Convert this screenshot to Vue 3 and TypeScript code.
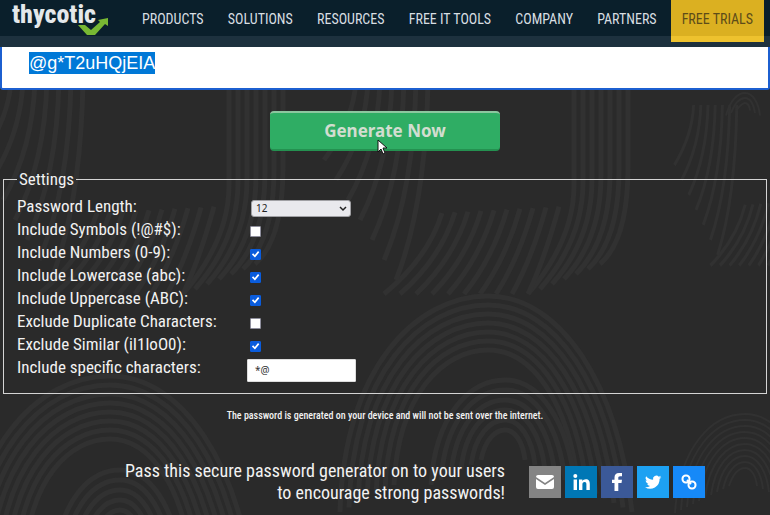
<script setup lang="ts">
import { onMounted, reactive, ref } from 'vue'

interface Toggle {
  id: string
  label: string
  checked: boolean
}

interface Whorl {
  cx: number
  cy: number
  pitch: number
  from: number
  to: number
  width: number
}

const navItems: string[] = ['PRODUCTS', 'SOLUTIONS', 'RESOURCES', 'FREE IT TOOLS', 'COMPANY', 'PARTNERS']

const toggles = reactive<Toggle[]>([
  { id: 'symbols', label: 'Include Symbols (!@#$):', checked: false },
  { id: 'numbers', label: 'Include Numbers (0-9):', checked: true },
  { id: 'lowercase', label: 'Include Lowercase (abc):', checked: true },
  { id: 'uppercase', label: 'Include Uppercase (ABC):', checked: true },
  { id: 'duplicates', label: 'Exclude Duplicate Characters:', checked: false },
  { id: 'similar', label: 'Exclude Similar (iI1loO0):', checked: true },
])

const lengths: number[] = [8, 10, 12, 14, 16, 20]
const length = ref<number>(12)
const password = ref<string>('@g*T2uHQjEIA')
const specific = ref<string>('*@')
const output = ref<HTMLTextAreaElement | null>(null)

function generate(): void {
  let pool = specific.value
  if (toggles[0].checked) pool += '!#$%&'
  if (toggles[1].checked) pool += '23456789'
  if (toggles[2].checked) pool += 'abcdefghjkmnpqrstuvwxyz'
  if (toggles[3].checked) pool += 'ABCDEFGHJKLMNPQRSTUVWXYZ'
  if (!pool) return
  const bytes = crypto.getRandomValues(new Uint32Array(length.value))
  password.value = Array.from(bytes, (n) => pool[n % pool.length]).join('')
}

// Long ridges that run down both sides of a padlock shape and sweep to the left below it.
function strands(): string[] {
  const paths: string[] = []
  for (let i = 0; i < 7; i++) {
    const x = 574 + i * 9
    paths.push(`M${x} 80 V${185 - i * 3} Q${x} 240 ${x - 46 + i * 3} ${294 - i * 5}`)
  }
  for (let i = 0; i < 10; i++) {
    const x = 442 + i * 13
    paths.push(`M${x} ${213 - i * 0.7} Q${x - 14} 258 ${x - 58 + i * 3} 294`)
  }
  for (let i = 0; i < 7; i++) {
    const x = 354 + i * 12
    paths.push(`M${x + 2} 80 Q${x} ${120 + i * 14} ${x - 30} ${160 + i * 20}`)
  }
  return paths
}

const ridges = strands()
const copies: string[] = ['', 'translate(-345 0)', 'translate(480 45) scale(.6 .75)']

// Nested arches, open at the foot.
const whorls: Whorl[] = [
  { cx: 488, cy: 440, pitch: 9, from: 10, to: 16, width: 5 },
  { cx: 505, cy: 450, pitch: 10, from: 2, to: 7, width: 5 },
  { cx: 110, cy: 520, pitch: 9, from: 9, to: 16, width: 5 },
  { cx: 120, cy: 530, pitch: 10, from: 2, to: 6, width: 5 },
  { cx: 745, cy: 480, pitch: 6, from: 2, to: 11, width: 2 },
  { cx: 745, cy: 108, pitch: 5, from: 1, to: 3, width: 2 },
]

function arches(w: Whorl): string {
  let d = ''
  for (let n = w.from; n <= w.to; n++) {
    const r = n * w.pitch
    const foot = w.cy + r * 0.5
    d += `M${w.cx - r - 4} ${foot} C${w.cx - r} ${w.cy - r * 0.5} ${w.cx - r * 0.5} ${w.cy - r} ${w.cx} ${w.cy - r} S${w.cx + r * 0.9} ${w.cy - r * 0.4} ${w.cx + r} ${foot} `
  }
  return d
}

onMounted(() => {
  output.value?.focus()
  output.value?.select()
})
</script>

<template>
  <div class="page">
    <svg class="prints" viewBox="0 0 770 515" preserveAspectRatio="xMidYMid slice" aria-hidden="true">
      <g v-for="(place, i) in copies" :key="i" :transform="place || undefined">
        <path v-for="(d, n) in ridges" :key="n" :d="d" stroke-width="5" />
      </g>
      <path v-for="(w, i) in whorls" :key="'w' + i" :d="arches(w)" :stroke-width="w.width" />
    </svg>

    <header class="bar">
      <a class="logo" href="#">
        <span>thycotic</span>
        <svg class="tick" viewBox="0 0 30 18" aria-hidden="true">
          <path d="M0 7h7l6 5 9-8-2-2L30 0v8l-3-2-10 11H9z" fill="#78b833" />
        </svg>
      </a>
      <nav class="nav">
        <a v-for="item in navItems" :key="item" href="#">{{ item }}</a>
      </nav>
      <a class="trial" href="#">FREE TRIALS</a>
    </header>

    <main>
      <textarea ref="output" v-model="password" class="password" aria-label="Generated password" spellcheck="false"></textarea>

      <div class="action">
        <button type="button" class="generate" @click="generate">Generate Now</button>
        <svg class="cursor" viewBox="0 0 11 17" aria-hidden="true">
          <path d="M1 1v12l3-3 2 5 2-1-2-5h4z" fill="#fff" stroke="#111" stroke-width="1" />
        </svg>
      </div>

      <fieldset class="settings">
        <legend>Settings</legend>
        <div class="row">
          <label for="length">Password Length:</label>
          <span class="picker">
            <select id="length" v-model="length">
              <option v-for="n in lengths" :key="n" :value="n">{{ n }}</option>
            </select>
            <svg viewBox="0 0 8 6" aria-hidden="true"><path d="M1 1l3 3 3-3" /></svg>
          </span>
        </div>
        <div v-for="t in toggles" :key="t.id" class="row">
          <label :for="t.id">{{ t.label }}</label>
          <input :id="t.id" v-model="t.checked" type="checkbox" />
        </div>
        <div class="row">
          <label for="specific">Include specific characters:</label>
          <input id="specific" v-model="specific" class="specific" type="text" />
        </div>
      </fieldset>

      <p class="note">The password is generated on your device and will not be sent over the internet.</p>

      <section class="share">
        <p>Pass this secure password generator on to your users<br />to encourage strong passwords!</p>
        <div class="links">
          <a class="mail" href="#" aria-label="Email">
            <svg viewBox="0 0 32 32"><path d="M9 9h14q2 0 2 2L16 17 7 11q0-2 2-2zM7 13l9 6 9-6v8q0 2-2 2H9q-2 0-2-2z" /></svg>
          </a>
          <a class="linkedin" href="#" aria-label="LinkedIn">
            <svg viewBox="0 0 32 32"><circle cx="10.300" cy="10" r="2" /><path d="M8.600 13.500h3.400V24H8.600zM14 13.500h3.300v1.500c.7-1.100 1.900-1.800 3.500-1.800 3 0 4 2 4 4.800v6h-3.400v-5.400c0-1.500-.2-2.600-1.800-2.600s-2.200 1.100-2.200 2.600V24H14z" /></svg>
          </a>
          <a class="facebook" href="#" aria-label="Facebook">
            <svg viewBox="0 0 32 32"><path d="M13.500 25v-8H11v-3.300h2.500v-2.200c0-3 1.500-4.500 4.500-4.500h3v3.300h-1.900c-1.500 0-1.800.7-1.800 1.800v1.600H21l-.5 3.300h-3.200v8z" /></svg>
          </a>
          <a class="twitter" href="#" aria-label="Twitter">
            <svg viewBox="0 0 32 32"><path transform="translate(8 8) scale(.68)" d="M24 4.600a10 10 0 0 1-2.800.8 5 5 0 0 0 2.200-2.700 10 10 0 0 1-3.100 1.200 4.900 4.900 0 0 0-8.400 4.500A14 14 0 0 1 1.700 3.200a4.900 4.900 0 0 0 1.500 6.500 5 5 0 0 1-2.200-.6v.1a4.900 4.900 0 0 0 4 4.800 5 5 0 0 1-2.200.1 4.900 4.900 0 0 0 4.600 3.400A9.900 9.900 0 0 1 0 19.500a14 14 0 0 0 21.500-12.400A10 10 0 0 0 24 4.600z" /></svg>
          </a>
          <a class="copy" href="#" aria-label="Copy link">
            <svg viewBox="0 0 32 32"><g fill="none" stroke="#fff" stroke-width="2"><rect x="9.500" y="9.500" width="7" height="7" rx="3.200" /><rect x="15.500" y="15.500" width="7" height="7" rx="3.200" /><path d="M14 14l4 4" /></g></svg>
          </a>
        </div>
      </section>
    </main>
  </div>
</template>

<style>
body {
  margin: 0;
  background: #2a2a2a;
}
</style>

<style scoped>
.page {
  position: relative;
  min-height: 100vh;
  overflow: hidden;
  box-sizing: border-box;
  background: #2a2a2a;
  color: #f2f2f2;
  font-family: 'Roboto Condensed', 'Liberation Sans Narrow', Roboto, sans-serif;
}

.prints {
  position: absolute;
  inset: 0;
  width: 100%;
  height: 100%;
  fill: none;
  stroke: #313131;
}

header,
main {
  position: relative;
}

a {
  color: inherit;
  text-decoration: none;
}

.bar {
  display: flex;
  align-items: flex-start;
  height: 47px;
  box-sizing: border-box;
  padding: 0 6px 0 12px;
  background: linear-gradient(#0a1f2b 0 36px, #1d313e 36px);
  color: #d8dee2;
  font-size: 14px;
  line-height: 38px;
}

.logo {
  position: relative;
  width: 96px;
  font-size: 26px;
  font-weight: 800;
  line-height: 28px;
  color: #e4e8ea;
}

.tick {
  position: absolute;
  right: 0;
  top: 18px;
  width: 30px;
  height: 18px;
}

.nav {
  display: flex;
  flex: 1;
  justify-content: space-between;
  padding: 0 14px 0 34px;
}

.trial {
  height: 42px;
  padding: 0 11px;
  background: linear-gradient(#dbb021 0 36px, #eec22e 36px);
  color: #5d4c19;
}

.password {
  display: block;
  width: 100%;
  height: 43px;
  box-sizing: border-box;
  margin: 0;
  padding: 5px 27px;
  border: 2px solid #1c5fd0;
  border-top: 0;
  border-radius: 0 0 3px 3px;
  outline: 0;
  resize: none;
  overflow: hidden;
  background: #fff;
  color: #333;
  font: 18px/22px 'Liberation Sans', Arial, sans-serif;
}

.password::selection {
  background: #0078d7;
  color: #fff;
}

.action {
  position: relative;
  width: 230px;
  margin: 21px auto 18px;
}

.generate {
  display: block;
  width: 100%;
  height: 40px;
  border: 0;
  border-top: 2px solid #8cc79f;
  border-bottom: 2px solid #249150;
  border-radius: 4px;
  background: #2fad64;
  color: #d3ddd0;
  font: 700 17px/34px 'Noto Sans', sans-serif;
}

.cursor {
  position: absolute;
  left: 107px;
  top: 28px;
  width: 11px;
  height: 17px;
}

.settings {
  margin: 0 3px;
  padding: 6px 12px 14px 13px;
  border: 1px solid #d4d4d4;
  font-size: 17px;
}

legend {
  padding: 0 2px;
  line-height: 20px;
}

.row {
  display: flex;
  align-items: center;
  height: 23px;
}

.row label {
  width: 233px;
  line-height: 23px;
}

.picker {
  position: relative;
  display: flex;
  margin: 4px 0 0 1px;
}

select {
  appearance: none;
  width: 100px;
  height: 17px;
  padding: 0 4px;
  border: 1px solid #a0a0a4;
  border-radius: 3px;
  background: #e9e9ed;
  color: #222;
  font: 10px/15px 'Noto Sans', sans-serif;
}

.picker svg {
  position: absolute;
  right: 4px;
  top: 6px;
  width: 8px;
  height: 6px;
  fill: none;
  stroke: #222;
  stroke-width: 1.5;
  pointer-events: none;
}

input[type='checkbox'] {
  appearance: none;
  width: 11px;
  height: 11px;
  margin: 4px 0 0;
  border: 1px solid #8f8f9d;
  border-radius: 1px;
  background: #fff;
}

input[type='checkbox']:checked {
  border-color: #0a5cdc;
  background: #0a5cdc;
}

input[type='checkbox']:checked::before {
  content: '';
  display: block;
  height: 9px;
  background: #fff;
  clip-path: polygon(10% 50%, 24% 36%, 42% 56%, 78% 12%, 92% 26%, 44% 84%);
}

.specific {
  width: 109px;
  height: 23px;
  box-sizing: border-box;
  margin: 5px 0 0 -3px;
  padding: 0 7px;
  border: 1px solid #ddd;
  border-radius: 1px;
  background: #fff;
  color: #333;
  font: 10px/20px 'Noto Sans', sans-serif;
}

.note {
  margin: 15px 0 0;
  text-align: center;
  font-size: 10px;
  font-weight: 500;
  line-height: 14px;
}

.share {
  display: flex;
  justify-content: center;
  align-items: center;
  gap: 24px;
  margin-top: 37px;
  padding-left: 60px;
  font-size: 18px;
  line-height: 22px;
}

.share p {
  margin: 0;
  text-align: right;
}

.links {
  display: flex;
  gap: 4px;
}

.links a,
.links svg {
  display: block;
  width: 32px;
  height: 32px;
  fill: #fff;
}

.mail {
  background: #848484;
}

.linkedin {
  background: #0077b5;
}

.facebook {
  background: #3b5998;
}

.twitter {
  background: #1da1f2;
}

.copy {
  background: #1689f8;
}
</style>
